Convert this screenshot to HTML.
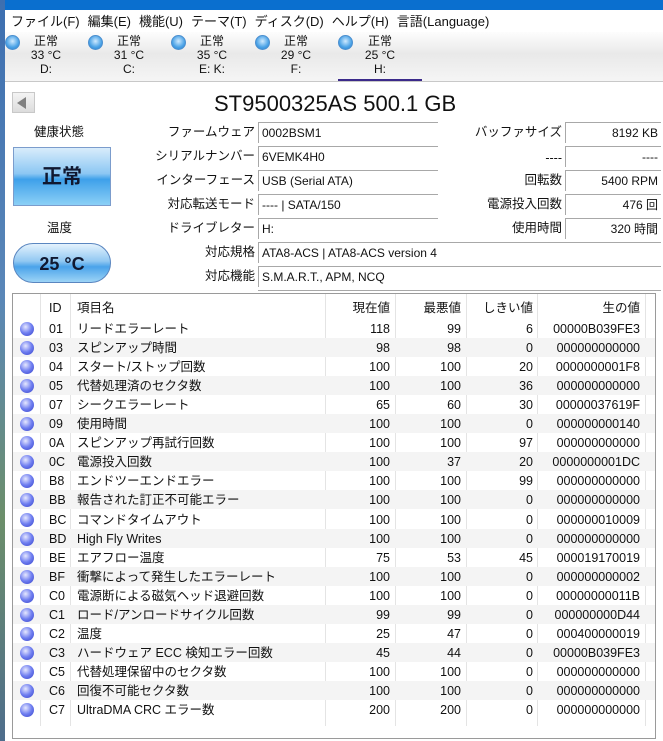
<!DOCTYPE html><html><head><meta charset="utf-8"><style>
*{margin:0;padding:0;box-sizing:border-box}
body{width:663px;height:741px;overflow:hidden;background:#fff;font-family:"Liberation Sans","Noto Sans CJK JP",sans-serif;font-size:12px;color:#111;position:relative;line-height:15px}
.a{position:absolute;white-space:nowrap}
.desk{left:0;top:0;width:5px;height:741px;background:linear-gradient(#3d6fb0,#5a87b8 40%,#6c8f6a 70%,#4e6d8c)}
.title{left:5px;top:0;width:658px;height:10px;background:#0a6fcf}
.menu{left:5px;top:10px;width:658px;height:22px;background:#fff;font-size:13px;padding:4px 0 0 6px;line-height:16px}
.menu span{margin-right:8px}
.bar{left:5px;top:32px;width:658px;height:49px;background:linear-gradient(#fdfdfd,#e9e9e9 45%,#f5f5f5)}
.line{left:5px;top:81px;width:658px;height:1px;background:#c8c8c8}
.dot{width:15px;height:15px;border-radius:50%;background:radial-gradient(circle at 50% 40%,#cfeaff,#4aa2e6 60%,#2a7fcc);border:1px solid #4c8fcf}
.dk{text-align:center;width:60px;font-size:12px;line-height:14px}
.lbl{text-align:right;width:200px;font-size:12.5px;line-height:16px}
.box{border-top:1px solid #a8a8a8;border-left:1px solid #a8a8a8;height:21px;padding:3px 0 0 3px;font-size:12px;line-height:15px}
.tbl{left:12px;top:293px;width:644px;height:446px;border:1px solid #9a9a9a}
.row{position:absolute;left:0;width:642px;height:19px;font-size:12.5px}
.row.s{background:#f4f4f4}
.row div{position:absolute;top:3px;line-height:15px}
.vl{position:absolute;top:0;width:1px;height:432px;background:#e4e4e4}
.rd{width:14px;height:14px;border-radius:50%;background:radial-gradient(circle at 40% 35%,#e6e8ff,#6f7ef0 50%,#3540c8);top:3px!important;left:7px}
</style></head><body>
<div class="a desk"></div>
<div class="a title"></div>
<div class="a menu"><span>ファイル(F)</span><span>編集(E)</span><span>機能(U)</span><span>テーマ(T)</span><span>ディスク(D)</span><span>ヘルプ(H)</span><span>言語(Language)</span></div>
<div class="a bar"></div>
<div class="a line"></div>
<div class="a dot" style="left:5px;top:35px"></div><div class="a dk" style="left:16px;top:34px">正常<br>33 °C<br>D:</div>
<div class="a dot" style="left:88px;top:35px"></div><div class="a dk" style="left:99px;top:34px">正常<br>31 °C<br>C:</div>
<div class="a dot" style="left:171px;top:35px"></div><div class="a dk" style="left:182px;top:34px">正常<br>35 °C<br>E: K:</div>
<div class="a dot" style="left:255px;top:35px"></div><div class="a dk" style="left:266px;top:34px">正常<br>29 °C<br>F:</div>
<div class="a dot" style="left:338px;top:35px"></div><div class="a dk" style="left:350px;top:34px">正常<br>25 °C<br>H:</div>
<div class="a" style="left:338px;top:79px;width:84px;height:2px;background:#3b2a8a"></div>
<div class="a" style="left:12px;top:92px;width:23px;height:21px;background:linear-gradient(#f4f4f4,#dcdcdc);border:1px solid #c8c8c8"></div>
<div class="a" style="left:17px;top:97px;width:0;height:0;border-top:6px solid transparent;border-bottom:6px solid transparent;border-right:9px solid #808080"></div>
<div class="a" style="left:214px;top:91px;font-size:22px;line-height:26px">ST9500325AS 500.1 GB</div>
<div class="a" style="left:34px;top:124px;font-size:12.5px;line-height:16px">健康状態</div>
<div class="a" style="left:13px;top:147px;width:98px;height:59px;border:1px solid #7b9ccc;background:linear-gradient(#d8ecfb,#8cc7f3 45%,#3ea0ea 55%,#8cd0f6);font-size:20px;font-weight:bold;text-align:center;padding-top:17px;line-height:24px;color:#101830">正常</div>
<div class="a" style="left:47px;top:220px;font-size:12.5px;line-height:16px">温度</div>
<div class="a" style="left:13px;top:243px;width:98px;height:40px;border:1px solid #5a86c0;border-radius:20px;background:linear-gradient(#e4f2fd,#92c8f2 45%,#4aa3ea 60%,#9cd4f6);font-size:18px;font-weight:bold;text-align:center;padding-top:10px;line-height:20px;color:#101830">25 °C</div>
<div class="a lbl" style="left:55px;top:124px">ファームウェア</div><div class="a box" style="left:258px;top:122px;width:180px">0002BSM1</div>
<div class="a lbl" style="left:55px;top:148px">シリアルナンバー</div><div class="a box" style="left:258px;top:146px;width:180px">6VEMK4H0</div>
<div class="a lbl" style="left:55px;top:172px">インターフェース</div><div class="a box" style="left:258px;top:170px;width:180px">USB (Serial ATA)</div>
<div class="a lbl" style="left:55px;top:196px">対応転送モード</div><div class="a box" style="left:258px;top:194px;width:180px">---- | SATA/150</div>
<div class="a lbl" style="left:55px;top:220px">ドライブレター</div><div class="a box" style="left:258px;top:218px;width:180px">H:</div>
<div class="a lbl" style="left:55px;top:244px">対応規格</div><div class="a box" style="left:258px;top:242px;width:403px">ATA8-ACS | ATA8-ACS version 4</div>
<div class="a lbl" style="left:55px;top:268px">対応機能</div><div class="a box" style="left:258px;top:266px;width:403px">S.M.A.R.T., APM, NCQ</div>
<div class="a" style="left:258px;top:290px;width:403px;height:1px;background:#a8a8a8"></div>
<div class="a lbl" style="left:362px;top:124px">バッファサイズ</div><div class="a box" style="left:565px;top:122px;width:96px;text-align:right;padding-right:3px">8192 KB</div>
<div class="a lbl" style="left:362px;top:150px">----</div><div class="a box" style="left:565px;top:146px;width:96px;text-align:right;padding-right:3px">----</div>
<div class="a lbl" style="left:362px;top:172px">回転数</div><div class="a box" style="left:565px;top:170px;width:96px;text-align:right;padding-right:3px">5400 RPM</div>
<div class="a lbl" style="left:362px;top:196px">電源投入回数</div><div class="a box" style="left:565px;top:194px;width:96px;text-align:right;padding-right:3px">476 回</div>
<div class="a lbl" style="left:362px;top:220px">使用時間</div><div class="a box" style="left:565px;top:218px;width:96px;text-align:right;padding-right:3px">320 時間</div>
<div class="a tbl">
<div class="vl" style="left:27px"></div><div class="vl" style="left:57px"></div><div class="vl" style="left:312px"></div><div class="vl" style="left:382px"></div><div class="vl" style="left:453px"></div><div class="vl" style="left:524px"></div><div class="vl" style="left:632px"></div>
<div class="row" style="top:4px"><div style="left:36px">ID</div><div style="left:64px">項目名</div><div style="right:265px">現在値</div><div style="right:194px">最悪値</div><div style="right:122px">しきい値</div><div style="right:15px">生の値</div></div>
<div id="rows"></div>
</div>
<script>
var d=[["01","リードエラーレート",118,99,6,"00000B039FE3"],["03","スピンアップ時間",98,98,0,"000000000000"],["04","スタート/ストップ回数",100,100,20,"0000000001F8"],["05","代替処理済のセクタ数",100,100,36,"000000000000"],["07","シークエラーレート",65,60,30,"00000037619F"],["09","使用時間",100,100,0,"000000000140"],["0A","スピンアップ再試行回数",100,100,97,"000000000000"],["0C","電源投入回数",100,37,20,"0000000001DC"],["B8","エンドツーエンドエラー",100,100,99,"000000000000"],["BB","報告された訂正不可能エラー",100,100,0,"000000000000"],["BC","コマンドタイムアウト",100,100,0,"000000010009"],["BD","High Fly Writes",100,100,0,"000000000000"],["BE","エアフロー温度",75,53,45,"000019170019"],["BF","衝撃によって発生したエラーレート",100,100,0,"000000000002"],["C0","電源断による磁気ヘッド退避回数",100,100,0,"00000000011B"],["C1","ロード/アンロードサイクル回数",99,99,0,"000000000D44"],["C2","温度",25,47,0,"000400000019"],["C3","ハードウェア ECC 検知エラー回数",45,44,0,"00000B039FE3"],["C5","代替処理保留中のセクタ数",100,100,0,"000000000000"],["C6","回復不可能セクタ数",100,100,0,"000000000000"],["C7","UltraDMA CRC エラー数",200,200,0,"000000000000"]];
var h="";d.forEach(function(r,i){h+='<div class="row'+(i%2?' s':'')+'" style="top:'+(25+i*19.05)+'px"><div class="rd"></div><div style="left:36px">'+r[0]+'</div><div style="left:64px">'+r[1]+'</div><div style="right:265px">'+r[2]+'</div><div style="right:194px">'+r[3]+'</div><div style="right:122px">'+r[4]+'</div><div style="right:15px">'+r[5]+'</div></div>'});
document.getElementById("rows").outerHTML=h;
</script>
</body></html>
